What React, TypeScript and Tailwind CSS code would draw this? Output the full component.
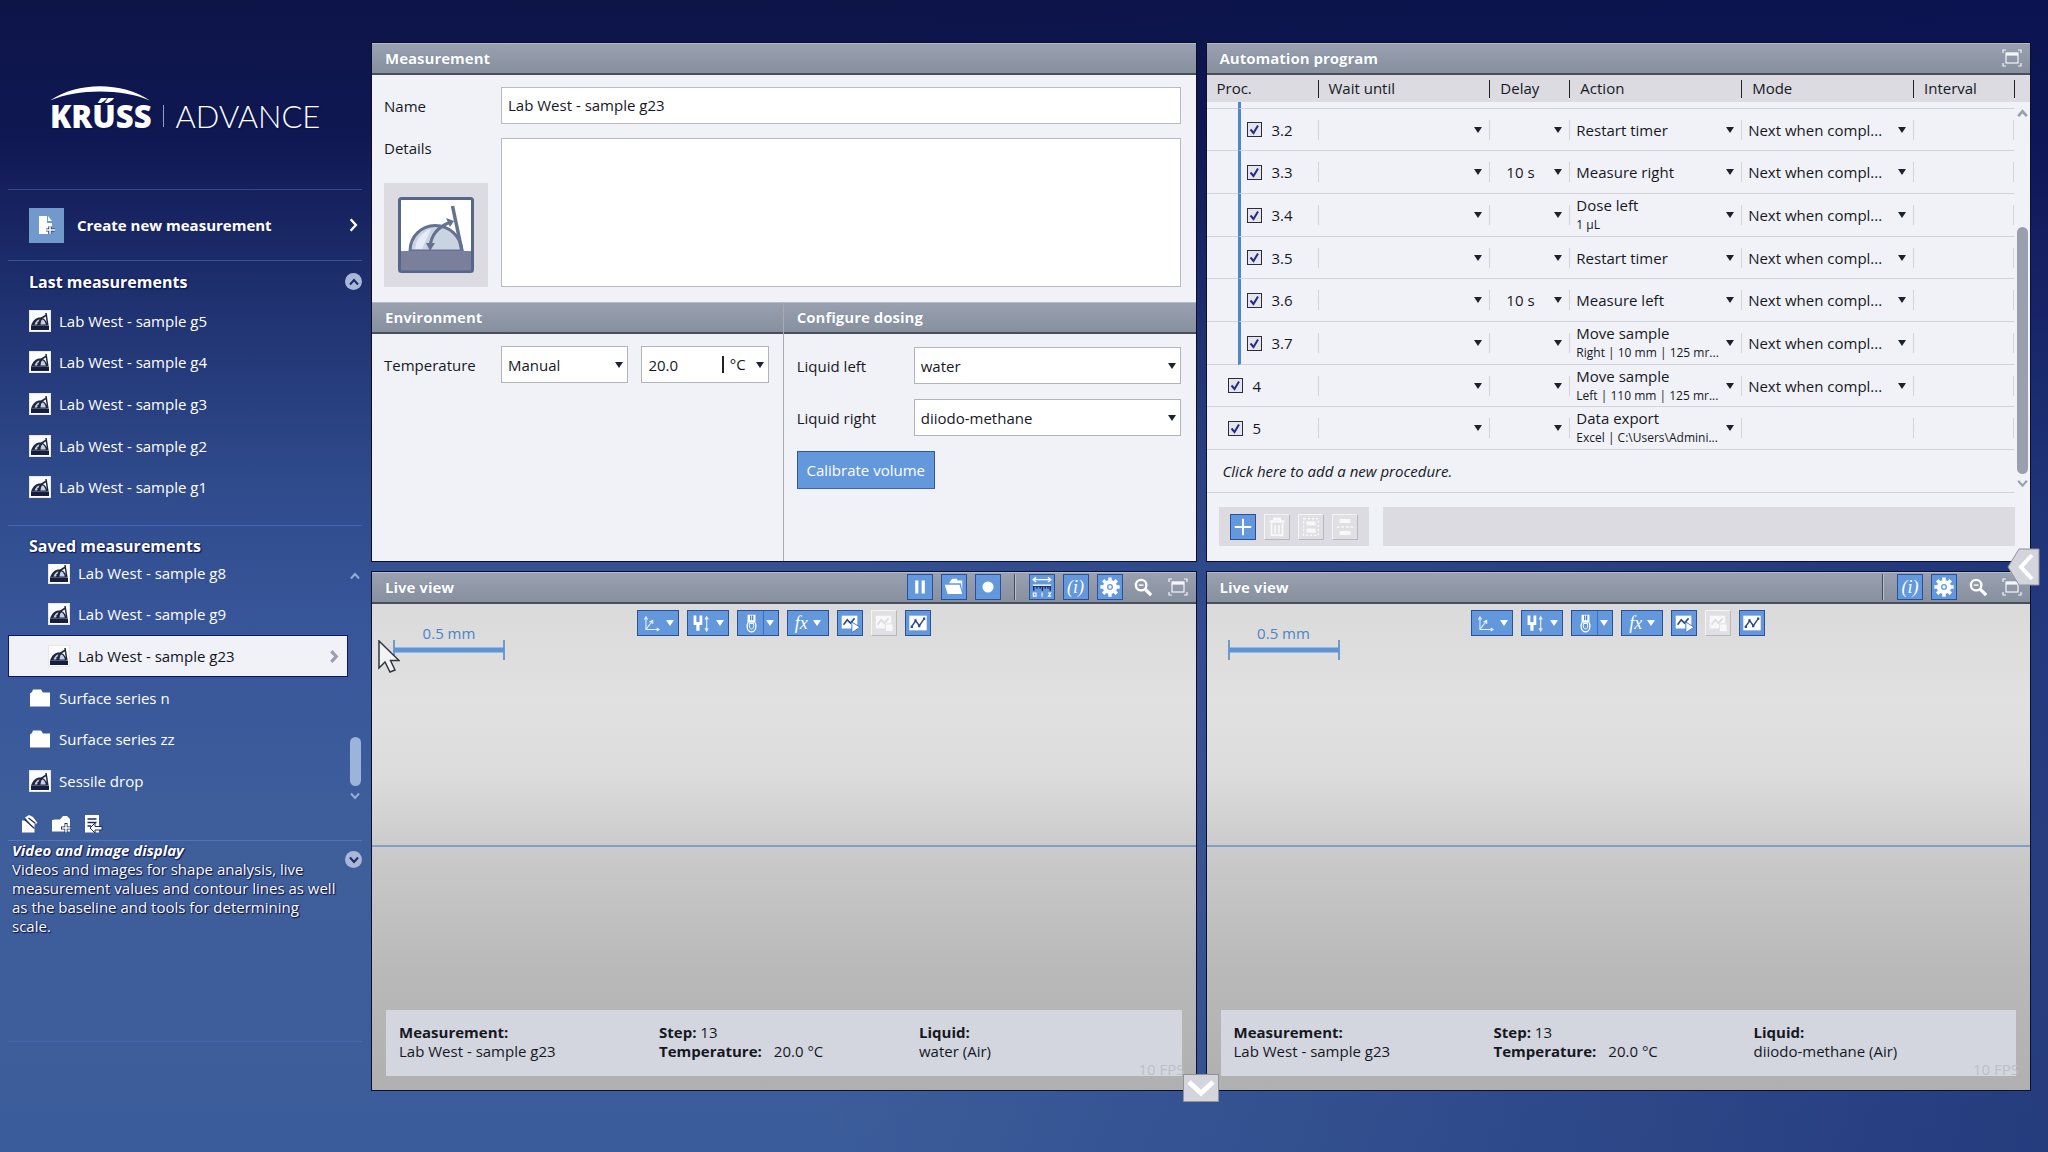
import React, { type ReactNode } from "react";

/* ---------- icons ---------- */

function DropIcon() {
  return (
    <svg viewBox="0 0 22 22" className="size-[22px] shrink-0" aria-hidden="true">
      <rect x="0.5" y="0.5" width="21" height="21" fill="#fbfcff" stroke="#e9e6dc" />
      <path d="M2 15.5C4 9.500 8 7 12 7.500C15.500 8 18.500 12 18.500 15.500Z" fill="#20263c" />
      <path d="M5.500 14.500C6.500 11.500 8.500 9.500 10.500 9.500L8 14.500ZM11.500 14.500C11.500 11 13 9 14 9.500C15.500 10.500 16.500 12.500 16.800 14.500Z" fill="#c3cfe8" />
      <path d="M17 3L18.800 15M12 8.500L17.500 5" stroke="#20263c" strokeWidth="1.500" fill="none" />
      <path d="M8 12L10 14.500L12 12.500Z" fill="#20263c" />
      <rect x="2" y="15.500" width="18" height="4.500" fill="#141d3c" />
    </svg>
  );
}

function LargeDropIcon() {
  return (
    <svg viewBox="0 0 76 76" className="size-[76px]" aria-hidden="true">
      <rect x="1.500" y="1.500" width="73" height="73" rx="2" fill="#fff" stroke="#56658a" strokeWidth="3" />
      <path d="M12 54C12 39 24 28.500 37 28.500C51 28.500 63 39 64 54Z" fill="#c9d3e2" stroke="#66718f" strokeWidth="3" />
      <path d="M17 52C18 42 24 35 33 32L24 52Z" fill="#e6ecf5" />
      <path d="M54.500 9L64 54" stroke="#66718f" strokeWidth="3.500" fill="none" />
      <path d="M32 50C33 38 39 30 53 25" stroke="#66718f" strokeWidth="3" fill="none" />
      <path d="M28 46H37L32 54ZM48 21L56 24L52 30Z" fill="#66718f" />
      <rect x="3" y="54" width="70" height="19.500" fill="#7a809c" />
    </svg>
  );
}

function FolderIcon() {
  return (
    <svg viewBox="0 0 22 18" className="h-[18px] w-[22px] shrink-0" aria-hidden="true">
      <path d="M1 4.500L3 3L4 0.500H12L14 3.500H21V17.500H1Z" fill="#fff" />
    </svg>
  );
}

function Chevron({ d, className }: { d: string; className: string }) {
  return (
    <svg viewBox="0 0 12 12" className={className} fill="none" stroke="currentColor" aria-hidden="true">
      <path d={d} />
    </svg>
  );
}

const UP = "M2 8.500L6 4L10 8.500";
const DOWN = "M2 3.500L6 8L10 3.500";
const RIGHT = "M4 1L8.500 6L4 11";

function MaximizeIcon() {
  return (
    <svg viewBox="0 0 20 18" className="h-[18px] w-[20px]" fill="none" stroke="#f4f6fa" aria-hidden="true">
      <path d="M1 4V1H4M16 1H19V4M19 14V17H16M4 17H1V14" strokeWidth="1.200" />
      <rect x="4" y="4" width="12" height="10" strokeWidth="1.200" />
      <path d="M4 5.200H16" strokeWidth="2.800" />
    </svg>
  );
}

function Glyph({ children, faint, small }: { children: ReactNode; faint?: boolean; small?: boolean }) {
  return (
    <svg
      viewBox="0 0 24 24"
      className={`${small ? "size-[19px]" : "size-[22px]"} ${faint ? "opacity-80" : ""}`}
      fill="none"
      stroke="#fff"
      strokeWidth="1.500"
      aria-hidden="true"
    >
      {children}
    </svg>
  );
}

const glyphs: Record<string, ReactNode> = {
  pause: <path d="M8.500 5V19M15.500 5V19" strokeWidth="3.500" />,
  open: (
    <g fill="#fff" stroke="none">
      <path d="M7 7L10 3H15L16 5H21V16L19.500 8H7Z" />
      <path d="M2 9.500H18L21 19.500H5Z" />
    </g>
  ),
  record: <circle cx="12" cy="12" r="6" fill="#fff" stroke="none" />,
  ruler: (
    <>
      <path d="M3 4H21M5.500 1.500L2.500 4L5.500 6.500M18.500 1.500L21.500 4L18.500 6.500" />
      <path d="M2 11H22M3 11V16M6.500 11V14M10 11V14M12.500 11V16M15.500 11V14M18.500 11V14M21 11V16" stroke="#172a5a" />
      <path d="M2 10H22" />
      <path d="M2.500 18.500H5.500V22H2.500ZM12 18V22.500M18.500 18.500H21.500L19 22H22" strokeWidth="1.200" />
    </>
  ),
  gear: (
    <>
      <circle cx="12" cy="12" r="5.500" strokeWidth="4.500" />
      <path d="M12 1.500V5M12 19V22.500M1.500 12H5M19 12H22.500M4.600 4.600L7 7M17 17L19.400 19.400M4.600 19.400L7 17M17 7L19.400 4.600" strokeWidth="3.800" />
      <circle cx="12" cy="12" r="1.800" fill="#fff" stroke="none" />
    </>
  ),
  axes: (
    <g stroke="#e3effd" strokeWidth="1.400">
      <path d="M5 4V19.500H21M3 7L5 3.500L7 7M18.500 17.500L21.500 19.500L18.500 21.500" />
      <path d="M5 19.500L13 9M9.500 10L13.500 8L13.500 12.500" />
    </g>
  ),
  needle: (
    <>
      <path d="M2 2H5.500V10H9.500V2H13V14H9.500V21H5.500V14H2Z" fill="#fff" stroke="none" />
      <path d="M18.500 4V21M16.500 7L18.500 3.500L20.500 7M16.500 18L18.500 21.500L20.500 18" stroke="#e3effd" />
    </>
  ),
  droplet: (
    <>
      <path d="M7 1H17V11H7Z" fill="#fff" stroke="none" />
      <path d="M11 2V8M13.500 2V8" stroke="#4676c4" />
      <path d="M7.500 11C5.500 14 6 22.500 12 22.500C18 22.500 18.500 14 16.500 11" strokeWidth="1.600" />
      <path d="M9.500 12C8.500 16 10 19 12 19C14 19 15.500 16 14.500 12Z" strokeWidth="1.200" />
    </>
  ),
  run: (
    <>
      <rect x="3" y="4" width="17" height="14" fill="#fff" stroke="none" />
      <path d="M5 14L9 8.500L12.500 12L17 7" stroke="#2a4c8c" strokeWidth="1.800" />
      <path d="M14 11L23 16.500L14 22.500Z" fill="#fff" stroke="#3d6fc0" strokeWidth="1" />
    </>
  ),
  stop: (
    <>
      <rect x="3" y="4" width="17" height="14" fill="#fff" stroke="none" />
      <path d="M5 14L9 8.500L12.500 12L17 7" stroke="#d9d9df" strokeWidth="1.800" />
      <rect x="13.500" y="13" width="8.500" height="8.500" fill="#fff" stroke="#e0e0e4" strokeWidth="1" />
    </>
  ),
  chart: (
    <>
      <rect x="2.500" y="4" width="19" height="16" fill="#fff" stroke="none" />
      <path d="M5 16L9.500 9.500L13.500 15L19 7" stroke="#2a4c8c" strokeWidth="1.600" />
      <path d="M4 15H6.500V17.500H4ZM8 8H10.500V10.500H8ZM12 14H14.500V16.500H12ZM17.500 6H20V8.500H17.500Z" fill="#2a4c8c" stroke="none" />
    </>
  ),
  plus: <path d="M12 3V21M3 12H21" strokeWidth="2" />,
  trash: (
    <>
      <path d="M4 6H20M9 5V3H15V5" strokeWidth="2.500" />
      <path d="M6 8V21H18V8M10 10V19M14 10V19" strokeWidth="2" />
    </>
  ),
  group: (
    <>
      <path d="M7 8H17M7 16H17" strokeWidth="4.500" />
      <path d="M4 3H20V21H4Z" strokeDasharray="2.500 2" strokeWidth="1.500" />
    </>
  ),
  ungroup: (
    <>
      <path d="M6 5.500H18M6 18.500H18" strokeWidth="4.500" />
      <path d="M3 12H21" strokeDasharray="3 2" strokeWidth="1.500" />
    </>
  ),
};

function Caret({ white }: { white?: boolean }) {
  return (
    <svg viewBox="0 0 8 6" className="pointer-events-none h-[6px] w-[8px] shrink-0" aria-hidden="true">
      <path d="M0 0H8L4 6Z" fill={white ? "#fff" : "#1d232e"} />
    </svg>
  );
}

/* ---------- controls ---------- */

type ToolButtonProps = { label: string; icon?: string; disabled?: boolean; menu?: boolean; split?: boolean; text?: string };

function ToolButton({ label, icon, disabled, menu, split, text }: ToolButtonProps) {
  const tone = disabled
    ? "border-[#f4f4f7] border-r-[#b7b7be] border-b-[#b7b7be] bg-[#dfdfe4]"
    : "border-[#2b4f98] bg-[#6398dd]";
  return (
    <button
      type="button"
      aria-label={label}
      disabled={disabled}
      className={`flex h-[26px] items-center justify-center border ${tone} ${menu ? "w-[42px] gap-[5px]" : "w-[26px]"}`}
    >
      {icon && <Glyph faint={disabled} small={menu}>{glyphs[icon]}</Glyph>}
      {text && <span className="font-['Liberation_Serif',serif] text-[18px] leading-[20px] text-white italic">{text}</span>}
      {split && <span className="-mr-[3px] -ml-[3px] h-full w-px bg-[#3d6fc0]" />}
      {menu && <Caret white />}
    </button>
  );
}

function PanelTitle({ title, children }: { title: string; children?: ReactNode }) {
  return (
    <header className="flex h-[32px] shrink-0 items-center border-b-2 border-[#4a4e56] bg-linear-to-b from-[#9aa1b1] to-[#87909f] pr-[8px] pl-[13px] shadow-[inset_0_1px_0_#b4bac6]">
      <h2 className="flex-1 text-[15px] leading-[20px] font-bold text-white [text-shadow:0_0_1px_#5f6f8c]">{title}</h2>
      {children}
    </header>
  );
}

function SelectBox({ id, value, label }: { id: string; value: string; label?: string }) {
  return (
    <div className="flex h-[37px] min-w-0 items-center border border-[#b3b4ba] bg-white pr-[4px]">
      <select id={id} aria-label={label} className="min-w-0 flex-1 appearance-none bg-transparent pl-[6px] outline-none">
        <option>{value}</option>
      </select>
      <Caret />
    </div>
  );
}

/* ---------- sidebar ---------- */

function MeasurementRow({ name, nested, selected, folder }: { name: string; nested?: boolean; selected?: boolean; folder?: boolean }) {
  const tone = selected
    ? "mr-[14px] border border-[#0d1768] bg-[#f1f2f7] text-[#10131c] [text-shadow:none]"
    : "border border-transparent";
  return (
    <li className={`flex min-h-0 items-center ${tone}`}>
      <button type="button" className={`flex h-full w-full items-center gap-[8px] pr-[7px] text-left ${nested ? "pl-[39px]" : "pl-[20px]"}`}>
        {folder ? <FolderIcon /> : <DropIcon />}
        <span className="flex-1">{name}</span>
        {selected && <Chevron d={RIGHT} className="size-[13px] stroke-[3] text-[#9a9fae]" />}
      </button>
    </li>
  );
}

function RoundToggle({ label, d }: { label: string; d: string }) {
  return (
    <button type="button" aria-label={label} className="flex size-[17px] items-center justify-center rounded-full bg-[#a9b8d8] text-[#1c2b63]">
      <Chevron d={d} className="size-[12px] stroke-2" />
    </button>
  );
}

function Sidebar() {
  return (
    <aside className="ml-[8px] flex w-[354px] shrink-0 flex-col text-white [text-shadow:1px_1px_1px_#0b1450,0_0_2px_#0b1450]">
      <div className="flex h-[148px] items-start border-b border-[#314b92] pt-[43px] pl-[42px]">
        <div className="flex items-end">
          <div className="flex flex-col">
            <svg viewBox="0 0 100 16" className="h-[16px] w-[100px]" aria-hidden="true">
              <path d="M0 15.500C28 -3.500 72 -3.500 100 15.500C72 3.500 28 3.500 0 15.500Z" fill="#fff" />
            </svg>
            <span className="font-['Open_Sans',sans-serif] text-[31px] leading-[31px] font-extrabold">KRŰSS</span>
          </div>
          <span className="mb-[5px] ml-[11px] h-[22px] w-px bg-[#8fa0cc]" />
          <span className="ml-[12px] font-['Lato',sans-serif] text-[31px] leading-[31px] font-light">ADVANCE</span>
        </div>
      </div>

      <button type="button" className="flex h-[71px] items-center border-b border-[#37539a] pr-[2px] pl-[21px] text-left">
        <span className="flex size-[35px] items-center justify-center bg-[#7299cb]">
          <svg viewBox="0 0 18 20" className="h-[20px] w-[18px]" aria-hidden="true">
            <path d="M1 1H9V8H14V12H10V19H1Z" fill="#fff" />
            <path d="M10 1L14 6H10Z" fill="#fff" />
            <path d="M12 11V19M8 15H17" stroke="#2c3f70" strokeWidth="3" />
            <path d="M12 11V19M8 15H17" stroke="#fff" strokeWidth="1.500" />
          </svg>
        </span>
        <span className="ml-[13px] flex-1 text-[15px] font-bold">Create new measurement</span>
        <Chevron d={RIGHT} className="size-[14px] stroke-2 text-white" />
      </button>

      <section className="h-[265px] border-b border-[#4565ae]">
        <div className="flex h-[39px] items-center justify-between pt-[2px] pl-[21px]">
          <h2 className="text-[16px] font-bold">Last measurements</h2>
          <RoundToggle label="Collapse last measurements" d={UP} />
        </div>
        <ul className="grid h-[208px] auto-rows-fr">
          {["g5", "g4", "g3", "g2", "g1"].map((n) => (
            <MeasurementRow key={n} name={`Lab West - sample ${n}`} />
          ))}
        </ul>
      </section>

      <section>
        <h2 className="h-[38px] pt-[10px] pl-[21px] text-[16px] font-bold">Saved measurements</h2>
        <div className="flex h-[238px]">
          <div className="flex min-w-0 flex-1 flex-col justify-end overflow-hidden">
            <ul className="grid h-[250px] shrink-0 auto-rows-fr">
              <MeasurementRow name="Lab West - sample g8" nested />
              <MeasurementRow name="Lab West - sample g9" nested />
              <MeasurementRow name="Lab West - sample g23" nested selected />
              <MeasurementRow name="Surface series n" folder />
              <MeasurementRow name="Surface series zz" folder />
              <MeasurementRow name="Sessile drop" />
            </ul>
          </div>
          <div className="-ml-[14px] flex w-[14px] flex-col items-center pt-[6px] text-[#8fb0dc]">
            <Chevron d={UP} className="size-[12px] stroke-2" />
            <span className="mt-auto mb-[4px] h-[49px] w-[11px] rounded-full bg-[#9cb3da]" />
            <Chevron d={DOWN} className="size-[12px] stroke-2" />
          </div>
        </div>
        <div className="flex h-[39px] items-end gap-[12px] border-b border-[#5273b4] pb-[6px] pl-[12px]">
          <button type="button" aria-label="New measurement">
            <svg viewBox="0 0 20 20" className="size-[20px]" aria-hidden="true">
              <path d="M2 6.500H6L14.500 14V18.500H2Z" fill="#fff" />
              <path d="M5 3.500L9 1L13 3L17.500 9L14.500 10.500V15Z" fill="#fff" />
              <path d="M4.500 5.500L14.500 14.500M8.500 4L15.500 9.500" stroke="#1c2b63" strokeWidth="1.200" />
            </svg>
          </button>
          <button type="button" aria-label="New folder">
            <svg viewBox="0 0 20 20" className="size-[20px]" aria-hidden="true">
              <path d="M0 6L3 5.500H8L11 2H15L18 5V17.500H0Z" fill="#fff" />
              <path d="M14 9V19M9 14H19" stroke="#1c2b63" strokeWidth="3" />
              <path d="M14 10V18.500M10 14H18.500" stroke="#fff" strokeWidth="1.500" />
            </svg>
          </button>
          <button type="button" aria-label="Load report">
            <svg viewBox="0 0 20 20" className="size-[20px]" aria-hidden="true">
              <path d="M1 1H15V18.500H1Z" fill="#fff" />
              <path d="M3.500 5H12.500M3.500 8.500H12.500M3.500 12H7" stroke="#1c2b63" strokeWidth="1.500" />
              <path d="M6 14L11 9V12.500H18V16H11V19Z" fill="#fff" stroke="#1c2b63" />
            </svg>
          </button>
        </div>
      </section>

      <section className="flex h-[201px] items-start justify-between border-b border-[#4768ac] pl-[4px]">
        <div className="w-[326px] text-[15px] leading-[19px]">
          <h2 className="font-bold italic">Video and image display</h2>
          <p>Videos and images for shape analysis, live measurement values and contour lines as well as the baseline and tools for determining scale.</p>
        </div>
        <div className="pt-[10px]">
          <RoundToggle label="Expand help" d={DOWN} />
        </div>
      </section>
    </aside>
  );
}

/* ---------- measurement panel ---------- */

function MeasurementPanel() {
  return (
    <section className="flex flex-col border border-[#0b0f2c] bg-[#f1f2f7]">
      <PanelTitle title="Measurement" />
      <div className="grid grid-cols-[104px_1fr] gap-x-[13px] gap-y-[14px] pt-[12px] pr-[15px] pb-[15px] pl-[12px]">
        <label htmlFor="name" className="self-center">Name</label>
        <input id="name" defaultValue="Lab West - sample g23" className="h-[37px] border border-[#b9bac1] bg-white px-[6px] pb-[2px] outline-none" />
        <div className="flex flex-col justify-between">
          <label htmlFor="details">Details</label>
          <div className="flex size-[104px] items-center justify-center bg-[#dbdbe1]">
            <LargeDropIcon />
          </div>
        </div>
        <textarea id="details" className="h-[149px] resize-none border border-[#b9bac1] bg-white outline-none" />
      </div>
      <div className="grid flex-1 grid-cols-2">
        <div className="flex flex-col border-r border-[#a9abb4]">
          <PanelTitle title="Environment" />
          <div className="grid grid-cols-[104px_1fr_1fr] items-center gap-[13px] pt-[12px] pr-[14px] pl-[12px]">
            <label htmlFor="temperature">Temperature</label>
            <SelectBox id="temperature" value="Manual" />
            <div className="flex h-[37px] min-w-0 items-center border border-[#b3b4ba] bg-white pr-[4px]">
              <input aria-label="Temperature value" defaultValue="20.0" className="w-0 min-w-0 flex-1 pl-[6px] outline-none" />
              <select aria-label="Temperature unit" className="mr-[6px] h-[17px] w-[28px] appearance-none border-l-2 border-[#222] pl-[6px] leading-[17px] outline-none">
                <option>°C</option>
              </select>
              <Caret />
            </div>
          </div>
        </div>
        <div className="flex flex-col">
          <PanelTitle title="Configure dosing" />
          <div className="grid grid-cols-[104px_1fr] items-center gap-x-[13px] gap-y-[15px] pt-[13px] pr-[15px] pl-[13px]">
            <label htmlFor="liquid-left">Liquid left</label>
            <SelectBox id="liquid-left" value="water" />
            <label htmlFor="liquid-right">Liquid right</label>
            <SelectBox id="liquid-right" value="diiodo-methane" />
            <button type="button" className="col-span-2 h-[38px] w-[138px] justify-self-start border border-[#2f57a5] border-b-[#3c67ad] bg-[#6398dd] text-[15px] text-white">
              Calibrate volume
            </button>
          </div>
        </div>
      </div>
    </section>
  );
}

/* ---------- automation program ---------- */

type Step = { id: string; delay?: string; action: string; detail?: string; mode?: string; grouped?: boolean };

const NEXT = "Next when compl...";
const steps: Step[] = [
  { id: "3.2", action: "Restart timer", mode: NEXT, grouped: true },
  { id: "3.3", delay: "10 s", action: "Measure right", mode: NEXT, grouped: true },
  { id: "3.4", action: "Dose left", detail: "1 µL", mode: NEXT, grouped: true },
  { id: "3.5", action: "Restart timer", mode: NEXT, grouped: true },
  { id: "3.6", delay: "10 s", action: "Measure left", mode: NEXT, grouped: true },
  { id: "3.7", action: "Move sample", detail: "Right | 10 mm | 125 mr...", mode: NEXT, grouped: true },
  { id: "4", action: "Move sample", detail: "Left | 110 mm | 125 mr...", mode: NEXT },
  { id: "5", action: "Data export", detail: "Excel | C:\\Users\\Admini..." },
];

type DropCellProps = { label: string; value?: string; detail?: string; indent?: boolean; empty?: boolean; edge?: boolean };

function DropCell({ label, value, detail, indent, empty, edge }: DropCellProps) {
  return (
    <td className="border-b border-[#d3d4da] p-0">
      <div className={`flex h-[20px] items-center border-l border-[#d3d4da] pr-[7px] ${edge ? "border-r" : ""}`}>
        {!empty && (
          <>
            <div className="flex min-w-0 flex-1 flex-col">
              <select aria-label={label} className={`w-full appearance-none bg-transparent leading-[20px] outline-none ${indent ? "pl-[16px]" : "pl-[6px]"}`}>
                <option>{value ?? ""}</option>
              </select>
              {detail && <span className="pl-[6px] text-[12px] leading-[20px] whitespace-nowrap">{detail}</span>}
            </div>
            <Caret />
          </>
        )}
      </div>
    </td>
  );
}

function HeadCell({ children, span, first, last }: { children?: ReactNode; span?: number; first?: boolean; last?: boolean }) {
  return (
    <th scope="col" colSpan={span} className="bg-[#dbdbe1] p-0 text-left font-normal">
      <div className={`h-[18px] leading-[17px] ${first ? "pl-[10px]" : last ? "border-l border-[#222]" : "border-l border-[#222] pl-[10px]"}`}>{children}</div>
    </th>
  );
}

function AutomationPanel() {
  return (
    <section className="relative flex flex-col border border-[#0b0f2c] bg-[#f1f2f7]">
      <PanelTitle title="Automation program">
        <button type="button" aria-label="Maximize"><MaximizeIcon /></button>
      </PanelTitle>
      <table className="w-full table-fixed border-separate border-spacing-0">
        <colgroup>
          <col className="w-[31px]" />
          <col className="w-[80px]" />
          <col />
          <col className="w-[80px]" />
          <col />
          <col />
          <col className="w-[101px]" />
          <col className="w-[16px]" />
        </colgroup>
        <thead>
          <tr className="h-[27px]">
            <HeadCell span={2} first>Proc.</HeadCell>
            <HeadCell>Wait until</HeadCell>
            <HeadCell>Delay</HeadCell>
            <HeadCell>Action</HeadCell>
            <HeadCell>Mode</HeadCell>
            <HeadCell>Interval</HeadCell>
            <HeadCell last />
          </tr>
        </thead>
        <tbody>
          <tr className="h-[7px]">
            <td className="border-b border-[#d3d4da]" />
            <td className="border-b border-l-[3px] border-b-[#d3d4da] border-l-[#4f86cc]" />
            <td colSpan={5} className="border-b border-[#d3d4da]" />
            <td rowSpan={10} className="p-0 align-top">
              <div className="flex h-[388px] flex-col items-center pt-[5px] text-[#9a9fae]">
                <Chevron d={UP} className="size-[13px] stroke-[2.500]" />
                <span className="mt-[107px] h-[247px] w-[11px] rounded-full bg-[#9a9fae]" />
                <Chevron d={DOWN} className="mt-[3px] size-[13px] stroke-2" />
              </div>
            </td>
          </tr>
          {steps.map((s, i) => (
            <tr key={s.id} className={i % 3 === 0 ? "h-[42px]" : "h-[43px]"}>
              {s.grouped && <td className="border-b border-[#d3d4da] p-0" />}
              <td
                colSpan={s.grouped ? 1 : 2}
                className={s.grouped ? "border-b border-l-[3px] border-b-[#d3d4da] border-l-[#4f86cc] py-0 pr-0 pl-[6px]" : "border-b border-[#d3d4da] py-0 pr-0 pl-[21px]"}
              >
                <label className="flex items-center gap-[10px]">
                  <span className="grid size-[15px] shrink-0">
                    <input type="checkbox" defaultChecked className="col-start-1 row-start-1 size-[15px] appearance-none border border-[#2a2d36] bg-[#e4e5ee]" />
                    <svg viewBox="0 0 15 15" className="pointer-events-none col-start-1 row-start-1" fill="none" stroke="#262a86" strokeWidth="2" aria-hidden="true">
                      <path d="M3.500 7.500L6.500 11L11 3.500" />
                    </svg>
                  </span>
                  {s.id}
                </label>
              </td>
              <DropCell label={`Wait until ${s.id}`} />
              <DropCell label={`Delay ${s.id}`} value={s.delay} indent />
              <DropCell label={`Action ${s.id}`} value={s.action} detail={s.detail} />
              <DropCell label={`Mode ${s.id}`} value={s.mode} empty={!s.mode} />
              <DropCell label={`Interval ${s.id}`} empty edge />
            </tr>
          ))}
          <tr className="h-[43px]">
            <td colSpan={7} className="border-b border-[#d3d4da] py-0 pl-[16px]">
              <button type="button" className="italic">Click here to add a new procedure.</button>
            </td>
          </tr>
        </tbody>
      </table>
      <div className="mt-[14px] flex gap-[14px] pr-[15px] pl-[12px]">
        <div className="flex h-[39px] items-center gap-[8px] bg-[#dbdbe1] px-[11px]">
          <ToolButton label="Add" icon="plus" />
          <ToolButton label="Delete" icon="trash" disabled />
          <ToolButton label="Group" icon="group" disabled />
          <ToolButton label="Ungroup" icon="ungroup" disabled />
        </div>
        <div className="flex-1 bg-[#dbdbe1]" />
      </div>
      <button type="button" aria-label="Show side panel" className="absolute right-[-10px] bottom-[-25px] z-10">
        <svg viewBox="0 0 33 38" className="h-[38px] w-[33px]" aria-hidden="true">
          <path d="M12 1H32V37H12L1 19Z" fill="#d4d5dc" stroke="#8f929d" />
          <path d="M25 7L14 19L25 31" fill="none" stroke="#fff" strokeWidth="4" />
        </svg>
      </button>
    </section>
  );
}

/* ---------- live view ---------- */

function LiveView({ liquid, controls }: { liquid: string; controls?: boolean }) {
  return (
    <section className="flex flex-col border border-[#0b0f2c] bg-[#c8c8c8]">
      <PanelTitle title="Live view">
        <div className="flex items-center gap-[8px]">
          {controls && (
            <>
              <ToolButton label="Pause" icon="pause" />
              <ToolButton label="Open" icon="open" />
              <ToolButton label="Record" icon="record" />
            </>
          )}
          <span className="mr-[5px] ml-[5px] h-[26px] w-[2px] border-l border-[#454a56] bg-[#b9bfcb]" />
          {controls && <ToolButton label="Scale" icon="ruler" />}
          <ToolButton label="Information" text="(i)" />
          <ToolButton label="Settings" icon="gear" />
          <button type="button" aria-label="Zoom out" className="mr-[5px] ml-[2px] flex w-[22px] justify-center">
            <svg viewBox="0 0 20 20" className="size-[19px]" fill="none" stroke="#fff" aria-hidden="true">
              <circle cx="7.500" cy="7.500" r="5.500" strokeWidth="2.500" />
              <path d="M5 7.500H10" strokeWidth="1.500" />
              <path d="M12 12L18 18" strokeWidth="3.500" />
            </svg>
          </button>
          <button type="button" aria-label="Maximize"><MaximizeIcon /></button>
        </div>
      </PanelTitle>
      <div className="grid flex-1 auto-rows-fr bg-[linear-gradient(180deg,#dadada_0%,#e1e1e1_20%,#dcdcdc_35%,#c9c9c9_52%,#b9b9b9_75%,#b0b0b0_100%)]">
        <div className="grid grid-cols-[1fr_auto_1fr] items-start border-b-2 border-[#7fa0c8] pt-[6px]">
          <div className="mt-[13px] ml-[21px] flex w-[112px] flex-col items-center text-[#4b84c6]">
            <span className="leading-[20px]">0.5 mm</span>
            <svg viewBox="0 0 112 20" className="-mt-[3px] h-[20px] w-[112px]" aria-hidden="true">
              <path d="M1 0V20M111 0V20" stroke="#4b84c6" strokeWidth="1.500" />
              <path d="M1 10H111" stroke="#5b95d8" strokeWidth="5" />
            </svg>
          </div>
          <div className="flex gap-[8px]">
            <ToolButton label="Coordinate system" icon="axes" menu />
            <ToolButton label="Needle" icon="needle" menu />
            <ToolButton label="Drop type" icon="droplet" menu split />
            <ToolButton label="Function" text="fx" menu />
            <ToolButton label="Start analysis" icon="run" />
            <ToolButton label="Stop analysis" icon="stop" disabled />
            <ToolButton label="Chart" icon="chart" />
          </div>
        </div>
        <div className="flex flex-col justify-end px-[14px] pb-[14px]">
          <div className="relative grid h-[66px] grid-cols-[260px_260px_1fr] items-start bg-[#d3d6df] pt-[13px] pl-[13px] leading-[19px]">
            <p><b>Measurement:</b><br />Lab West - sample g23</p>
            <p><b>Step:</b> 13<br /><b className="mr-[12px]">Temperature:</b>20.0 °C</p>
            <p><b>Liquid:</b><br />{liquid}</p>
            <span className="absolute right-[-3px] bottom-[-3px] text-[#bcbfc8]">10 FPS</span>
          </div>
        </div>
      </div>
    </section>
  );
}

export default function App() {
  return (
    <div className="relative flex min-h-screen bg-[linear-gradient(90deg,transparent_40%,rgba(10,20,90,0.450)_100%),linear-gradient(180deg,#0c1448_0%,#101853_12%,#1b2a68_22%,#2f4b8c_42%,#38569a_55%,#3f5f9b_75%,#3b5c9a_100%)] pt-[42px] pr-[17px] pb-[61px] font-['Open_Sans','Noto_Sans',sans-serif] text-[15px] leading-[20px] text-[#16181f]">
      <Sidebar />
      <main className="relative ml-[9px] grid min-w-0 flex-1 auto-rows-fr grid-cols-2 gap-[9px]">
        <MeasurementPanel />
        <AutomationPanel />
        <LiveView liquid="water (Air)" controls />
        <LiveView liquid="diiodo-methane (Air)" />
        <button type="button" aria-label="Show bottom panel" className="absolute bottom-[-11px] left-1/2 -translate-x-1/2 border border-[#8f929d] bg-[#d4d5dc]">
          <svg viewBox="0 0 34 26" className="h-[26px] w-[34px]" aria-hidden="true">
            <path d="M5 7L17 18L29 7" fill="none" stroke="#fff" strokeWidth="5" />
          </svg>
        </button>
        <svg viewBox="0 0 22 33" className="pointer-events-none absolute top-[598px] left-[7px] h-[33px] w-[22px]" aria-hidden="true">
          <path d="M1 1V28L7 22L12 32L17 30L12.500 20.500H21Z" fill="#f3f3f6" stroke="#33363f" strokeWidth="1.500" />
        </svg>
      </main>
    </div>
  );
}
